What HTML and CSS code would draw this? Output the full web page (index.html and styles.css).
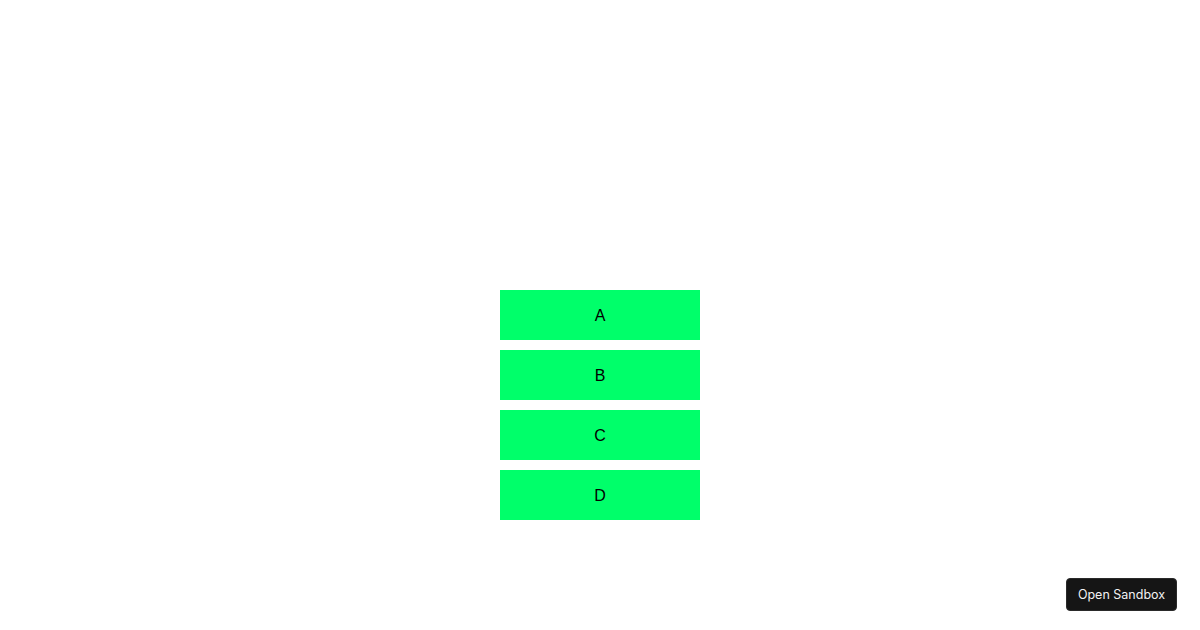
FILE: index.html
```html
<!DOCTYPE html>
<html>
<head>
<meta charset="utf-8">
<link rel="stylesheet" href="styles.css">
</head>
<body>
<div class="stack">
  <div class="item">A</div>
  <div class="item">B</div>
  <div class="item">C</div>
  <div class="item">D</div>
</div>
<button class="sandbox">Open Sandbox</button>
</body>
</html>
```
FILE: styles.css
```css
html, body {
  margin: 0;
  padding: 0;
  background: #ffffff;
  height: 100%;
}
body {
  font-family: "Liberation Sans", Arial, sans-serif;
}
.stack {
  display: flex;
  flex-direction: column;
  align-items: center;
  gap: 10px;
  padding-top: 290px;
}
.item {
  box-sizing: border-box;
  width: 200px;
  height: 50px;
  padding-top: 2px;
  background: #00ff6a;
  color: #000;
  font-size: 16px;
  display: flex;
  align-items: center;
  justify-content: center;
}
.sandbox {
  position: fixed;
  right: 23px;
  bottom: 19px;
  width: 111px;
  height: 33px;
  padding: 0;
  border: 1px solid #2a2a2a;
  border-radius: 4px;
  background: #151515;
  color: #f2f2f2;
  font-family: Inter, "Liberation Sans", sans-serif;
  font-size: 12.5px;
  display: flex;
  align-items: center;
  justify-content: center;
}
```
